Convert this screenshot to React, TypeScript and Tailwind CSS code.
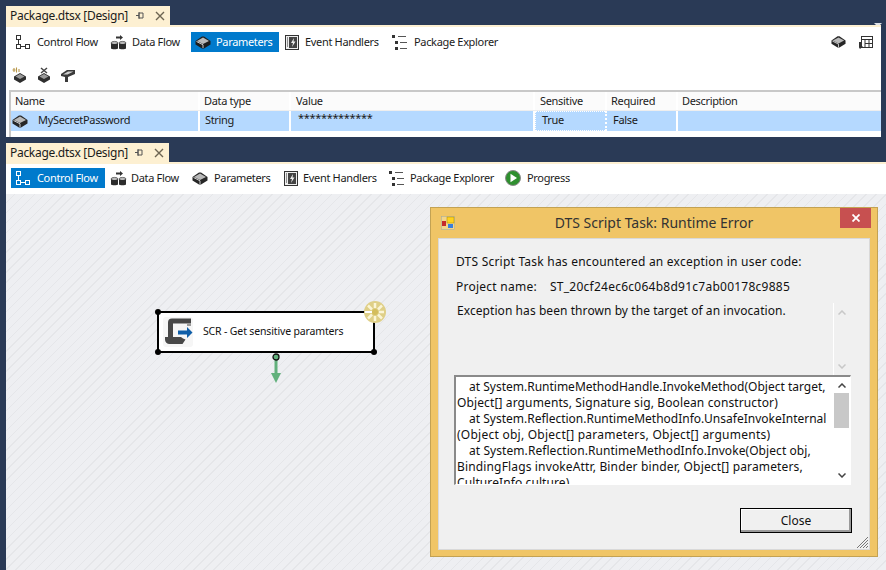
import React from "react";

const Box = ({ w = 16, inv = false }: { w?: number; inv?: boolean }) => (
  <svg width={w} height={w} viewBox="0 0 16 16" className="shrink-0">
    <path d="M0.500 7 7 2.500h2L15.500 7v3.500L9 14.500H7L0.500 10.500z" fill={inv ? "#1d1d1d" : "#262626"} />
    <path d="M2 7 8 3.600 14 7 8 10z" fill="#b9b9b9" />
    <path d="M1.500 7.500 8 10.800v3.200" fill="none" stroke="#f2f2f2" strokeWidth="0.800" />
  </svg>
);

const SmallParam = ({ kind }: { kind: "add" | "del" | "y" }) => (
  <svg width="16" height="16" viewBox="0 0 16 16" className="shrink-0">
    {kind !== "y" && <path d="M2 9.500 8 6l6 3.500v3L8 16l-6-3.500z" fill="#2e2e2e" />}
    {kind !== "y" && <path d="M3.500 9.500 8 7l4.500 2.500L8 12z" fill="#9a9a9a" />}
    {kind === "add" && <path d="M2 1v4M4.500 0.500v5M0.500 3h3M7 2v3" stroke="#b8974a" strokeWidth="1.100" fill="none" />}
    {kind === "del" && <path d="M5 1l6 5M11 1 5 6" stroke="#444" strokeWidth="1.500" fill="none" />}
    {kind === "y" && (
      <>
        <path d="M1 7 7 3h8v4l-7 3v5H5v-5L1 9z" fill="#3a3a3a" />
        <path d="M3 7.500 8 4.500h5.500l-6 3z" fill="#cfcfcf" />
      </>
    )}
  </svg>
);

const ControlIcon = ({ inv = false }: { inv?: boolean }) => {
  const c = inv ? "#fff" : "#333";
  return (
    <svg width="16" height="16" viewBox="0 0 16 16" className="shrink-0">
      <g fill="none" stroke={c} strokeWidth="1">
        <rect x="1.500" y="1.500" width="4" height="4" />
        <rect x="1.500" y="10.500" width="4" height="4" />
        <rect x="10.500" y="10.500" width="4" height="4" />
        <path d="M3.500 6v4M6 12.500h4" />
      </g>
    </svg>
  );
};

const DataIcon = () => (
  <svg width="17" height="17" viewBox="0 0 17 17" className="shrink-0">
    <path d="M6 2.500h4V1l3 2.500L10 6V4.500H6z" fill="#333" />
    <ellipse cx="4.500" cy="9" rx="3.500" ry="1.600" fill="#bbb" stroke="#222" strokeWidth="0.600" />
    <path d="M1 9v5.500c0 1 7 1 7 0V9c0 1.300-7 1.300-7 0z" fill="#2c2c2c" />
    <ellipse cx="12.500" cy="9" rx="3.500" ry="1.600" fill="#bbb" stroke="#222" strokeWidth="0.600" />
    <path d="M9 9v5.500c0 1 7 1 7 0V9c0 1.300-7 1.300-7 0z" fill="#2c2c2c" />
  </svg>
);

const EventIcon = () => (
  <svg width="14" height="15" viewBox="0 0 14 15" className="shrink-0">
    <rect x="0.500" y="0.500" width="13" height="14" fill="#eee" stroke="#333" />
    <path d="M2 3h1M2 5h1M2 7h1M2 9h1M2 11h1" stroke="#333" />
    <rect x="4" y="2" width="8" height="11" fill="#444" />
    <path d="M9 3 6 8h2l-1 4 3.500-5.500H8.500z" fill="#eee" />
  </svg>
);

const ExplorerIcon = () => (
  <svg width="15" height="15" viewBox="0 0 15 15" className="shrink-0">
    <g fill="#333">
      <rect x="0" y="0" width="3" height="3" />
      <rect x="3" y="6" width="3" height="3" />
      <rect x="3" y="12" width="3" height="3" />
      <rect x="6" y="1" width="8" height="1" fill="#555" />
      <rect x="8" y="7" width="7" height="1" fill="#555" />
      <rect x="8" y="13" width="7" height="1" fill="#555" />
    </g>
  </svg>
);

const ProgressIcon = () => (
  <svg width="16" height="16" viewBox="0 0 16 16" className="shrink-0">
    <circle cx="8" cy="8" r="7.500" fill="#2f8f2f" stroke="#8a8a8a" strokeWidth="1" />
    <path d="M5.500 3.800 12 8l-6.500 4.200z" fill="#fff" />
  </svg>
);

const Tab = ({ textW, pinGap, closeGap }: { textW: string; pinGap: string; closeGap: string }) => (
  <div className="flex h-[19px] w-fit items-center bg-[#fdf0d2] pl-1 pr-[5px] text-[12px] tracking-[-0.3px] text-[#1b1b1b]">
    <span className={`whitespace-nowrap pt-[1px] ${textW}`}>Package.dtsx [Design]</span>
    <svg width="9" height="9" viewBox="0 0 9 9" className={`shrink-0 ${pinGap}`}>
      <path d="M0 4.500h3M3 2h4v5H3zM3 1v7" fill="none" stroke="#555" />
    </svg>
    <svg width="10" height="10" viewBox="0 0 10 10" className={`shrink-0 ${closeGap}`}>
      <path d="M1 1l8 8M9 1l-8 8" stroke="#6d6552" strokeWidth="1.400" />
    </svg>
  </div>
);

const Item = ({ icon, label, active, ml, gap, w }: { icon: React.ReactNode; label: string; active?: boolean; ml: string; gap: string; w: string }) => (
  <div className={`flex h-5 shrink-0 items-center pl-1 ${ml} ${gap} ${w} ${active ? "bg-[#007acc] text-white" : "text-[#1b1b1b]"}`}>
    {icon}
    <span className="whitespace-nowrap">{label}</span>
  </div>
);

const Cell = ({ w, children, className = "" }: { w: string; children?: React.ReactNode; className?: string }) => (
  <div className={`flex h-full shrink-0 items-center border-r-2 border-white ${w} ${className}`}>{children}</div>
);

export default function App() {
  return (
    <div className="flex h-[570px] w-[886px] flex-col overflow-hidden bg-[#2a3a56] font-['Noto_Sans','Open_Sans',sans-serif] text-[11px] tracking-[-0.33px]">
      {/* Top document */}
      <div className="ml-[6px] mt-[6px] flex h-[19px] items-center justify-between">
        <Tab textW="w-[116px]" pinGap="ml-[10px]" closeGap="ml-[10px]" />
        <svg width="8" height="5" viewBox="0 0 8 5" className="mr-[4px] mt-[20px]">
          <path d="M0 0h8L4 4z" fill="#dfe3ea" />
        </svg>
      </div>
      <div className="ml-[6px] mr-[5px] h-[112px] shrink-0 border-t-2 border-[#fdf0d2] bg-white">
        <div className="flex h-[25px] items-end justify-between">
          <div className="flex items-center">
            <Item icon={<ControlIcon />} label="Control Flow" ml="ml-[5px]" gap="gap-[6px]" w="w-[95px]" />
            <Item icon={<DataIcon />} label="Data Flow" ml="ml-0" gap="gap-[5px]" w="w-[85px]" />
            <Item icon={<Box inv />} label="Parameters" active ml="ml-0" gap="gap-[5px]" w="w-[88px]" />
            <Item icon={<EventIcon />} label="Event Handlers" ml="ml-[2px]" gap="gap-[6px]" w="w-[107px]" />
            <Item icon={<ExplorerIcon />} label="Package Explorer" ml="ml-0" gap="gap-[7px]" w="w-[120px]" />
          </div>
          <div className="mr-[8px] flex items-center gap-[13px] pb-[3px]">
            <Box w={15} />
            <svg width="14" height="14" viewBox="0 0 14 14">
              <g fill="none" stroke="#333">
                <rect x="2.500" y="1.500" width="11" height="11" />
                <path d="M2.500 4.500h11M6 4.500v8M10 4.500v8M6 8.500h8" />
              </g>
              <path d="M0 7h2v4h2l-3 3-2-3h1z" fill="#333" />
            </svg>
          </div>
        </div>
        <div className="flex h-[38px] items-center gap-[8px] pl-[6px] pt-[8px]">
          <SmallParam kind="add" />
          <SmallParam kind="del" />
          <SmallParam kind="y" />
        </div>
        <div className="ml-[3px] h-[47px] border-l-2 border-t-2 border-[#c8c8c8] text-[#1b1b1b]">
          <div className="flex h-[19px] items-center border-b border-[#eee] bg-[#fbfbfb]">
            <Cell w="w-[189px]" className="pl-[4px]">Name</Cell>
            <Cell w="w-[91px]" className="pl-[4px]">Data type</Cell>
            <Cell w="w-[244px]" className="pl-[5px]">Value</Cell>
            <Cell w="w-[72px]" className="pl-[5px]">Sensitive</Cell>
            <Cell w="w-[71px]" className="pl-[4px]">Required</Cell>
            <div className="pl-[4px]">Description</div>
          </div>
          <div className="flex h-[20px] items-center bg-[#b5d9ff] pb-0">
            <Cell w="w-[189px]" className="pb-[1px] pl-[1px]">
              <Box w={16} />
              <span className="ml-[10px]">MySecretPassword</span>
            </Cell>
            <Cell w="w-[91px]" className="pb-[1px] pl-[5px]">String</Cell>
            <Cell w="w-[244px]" className="pl-[7px]">
              <span className="-mt-[6px]">*************</span>
            </Cell>
            <Cell w="w-[72px]" className="border-[1px] border-dotted border-black pb-[1px] pl-[6px]">True</Cell>
            <Cell w="w-[71px]" className="pb-[1px] pl-[6px]">False</Cell>
          </div>
        </div>
      </div>

      {/* Bottom document */}
      <div className="ml-[6px] mt-[6px]">
        <Tab textW="w-[115px]" pinGap="ml-[10px]" closeGap="ml-[10px]" />
      </div>
      <div className="ml-[6px] flex min-h-0 flex-1 flex-col">
        <div className="flex h-[32px] shrink-0 items-center border-t-2 border-[#fdf0d2] bg-white pb-[2px]">
          <Item icon={<ControlIcon inv />} label="Control Flow" active ml="ml-[5px]" gap="gap-[6px]" w="w-[94px]" />
          <Item icon={<DataIcon />} label="Data Flow" ml="ml-[1px]" gap="gap-[4px]" w="w-[82px]" />
          <Item icon={<Box />} label="Parameters" ml="ml-0" gap="gap-[6px]" w="w-[92px]" />
          <Item icon={<EventIcon />} label="Event Handlers" ml="ml-0" gap="gap-[5px]" w="w-[105px]" />
          <Item icon={<ExplorerIcon />} label="Package Explorer" ml="ml-0" gap="gap-[6px]" w="w-[116px]" />
          <Item icon={<ProgressIcon />} label="Progress" ml="ml-0" gap="gap-[6px]" w="w-[80px]" />
        </div>
        <div className="relative min-h-0 flex-1 bg-[#eeeff2] bg-[repeating-linear-gradient(135deg,#eeeff2_0,#eeeff2_6px,#e5e6e9_6px,#e5e6e9_7px)]">
          {/* Task node */}
          <div className="absolute left-[151px] top-[117px] flex h-[42px] w-[218px] items-center rounded-[3px] border-2 border-black bg-white text-[10.500px] tracking-[-0.15px] text-[#111]">
            <svg width="30" height="30" viewBox="0 0 30 30" className="ml-[4px] shrink-0">
              <rect x="0" y="0" width="30" height="30" rx="3" fill="#f6f6f6" />
              <path d="M28 1.500H9a4 4 0 0 0-4 4V20h5V6.500h18z" fill="#484848" />
              <path d="M24 6.500h4v2.500h-4z" fill="#9a9a9a" />
              <path d="M2 20h16l2 1.500 2.500 1-3 4.500H6.500A4.500 4.500 0 0 1 2 22.500z" fill="#484848" />
              <path d="M15 13.500h9V10l5.500 5.500L24 21v-3.500h-9z" fill="#0f5ea8" />
            </svg>
            <span className="ml-[10px] whitespace-nowrap">SCR - Get sensitive paramters</span>
            <span className="absolute -left-[4px] -top-[4px] size-[6px] rounded-full bg-black" />
            <span className="absolute -bottom-[4px] -left-[4px] size-[6px] rounded-full bg-black" />
            <span className="absolute -bottom-[4px] -right-[4px] size-[6px] rounded-full bg-black" />
            <svg width="24" height="24" viewBox="0 0 24 24" className="absolute -right-[14px] -top-[13px]">
              <circle cx="12" cy="12" r="11" fill="#dfcf87" />
              <g stroke="#fbf5d6" strokeWidth="2.500">
                <path d="M12 3v5M12 16v5M16 12h5M5 5.500l4 4M19 5.500l-4 4M5 18.500l4-4M19 18.500l-4-4" />
              </g>
              <rect x="2" y="11" width="7" height="2" fill="#fff" />
              <circle cx="12" cy="12" r="3" fill="#d4bd5c" />
            </svg>
          </div>
          <svg width="14" height="32" viewBox="0 0 14 32" className="absolute left-[263px] top-[158px]">
            <path d="M7 7v16" stroke="#62b17c" strokeWidth="3" />
            <path d="M2 21h10l-5 10z" fill="#62b17c" />
            <circle cx="7" cy="5" r="3" fill="#62b17c" stroke="#111" strokeWidth="1.300" />
          </svg>

          {/* Dialog */}
          <div className="absolute left-[424px] top-[13px] flex h-[350px] w-[448px] flex-col border border-[#c3a253] bg-[#f0c566] tracking-normal">
            <div className="relative flex h-[30px] shrink-0 items-center justify-center pb-[2px] text-[14px] text-[#333]">
              <svg width="14" height="14" viewBox="0 0 14 14" className="absolute left-[10px] top-[8px]">
                <rect x="0.500" y="0.500" width="13" height="13" fill="#f2d58a" stroke="#9aa" strokeWidth="0.500" />
                <rect x="6" y="1" width="7" height="6" fill="#ffd21f" stroke="#a80" strokeWidth="0.500" />
                <rect x="1" y="5" width="4" height="5" fill="#c62a2a" />
                <rect x="7" y="8" width="5" height="4" fill="#3a7fdc" />
              </svg>
              <span>DTS Script Task: Runtime Error</span>
              <div className="absolute right-[6px] top-0 flex h-[20px] w-[31px] items-center justify-center bg-[#c75050]">
                <svg width="8" height="8" viewBox="0 0 8 8">
                  <path d="M0.500 0.500l7 7M7.500 0.500l-7 7" stroke="#fff" strokeWidth="1.800" />
                </svg>
              </div>
            </div>
            <div className="relative mx-[7px] mb-[6px] flex-1 border border-[#d9d9d9] bg-[#f0f0f0] text-[12px] text-[#111]">
              <div className="pl-[17px] pt-[14px] tracking-[0.22px]">DTS Script Task has encountered an exception in user code:</div>
              <div className="flex pl-[17px] pt-[7px] tracking-[0.25px]">
                <span className="w-[94px]">Project name:</span>
                <span>ST_20cf24ec6c064b8d91c7ab00178c9885</span>
              </div>
              <div className="ml-[15px] mr-[20px] flex h-[79px] items-start justify-between pl-[3px] tracking-[0.07px]">
                <span className="mt-[6px]">Exception has been thrown by the target of an invocation.</span>
                <div className="mt-[7px] flex h-[72px] w-[16px] shrink-0 flex-col items-center justify-between border-l border-white pb-[6px] pt-[7px] text-[#c8c8c8]">
                  <svg width="8" height="5" viewBox="0 0 8 5"><path d="M0.500 4.500 4 1l3.500 3.500" fill="none" stroke="currentColor" strokeWidth="1.500" /></svg>
                  <svg width="8" height="5" viewBox="0 0 8 5"><path d="M0.500 0.500 4 4l3.500-3.500" fill="none" stroke="currentColor" strokeWidth="1.500" /></svg>
                </div>
              </div>
              <div className="ml-[15px] flex h-[110px] w-[397px] overflow-hidden border-b border-l-2 border-r border-t-2 border-b-white border-l-[#8a8a8a] border-r-white border-t-[#8a8a8a] bg-white">
                <div className="w-[378px] shrink-0 overflow-hidden pl-[1px] pt-[2px] leading-[16px]">
                  <div className="indent-[12px] tracking-[0px]">at System.RuntimeMethodHandle.InvokeMethod(Object target,</div>
                  <div className="tracking-[0.12px]">Object[] arguments, Signature sig, Boolean constructor)</div>
                  <div className="indent-[12px] tracking-[0px]">at System.Reflection.RuntimeMethodInfo.UnsafeInvokeInternal</div>
                  <div className="tracking-[0.25px]">(Object obj, Object[] parameters, Object[] arguments)</div>
                  <div className="indent-[12px] tracking-[0.07px]">at System.Reflection.RuntimeMethodInfo.Invoke(Object obj,</div>
                  <div className="tracking-[0.15px]">BindingFlags invokeAttr, Binder binder, Object[] parameters,</div>
                  <div className="tracking-[0.1px]">CultureInfo culture)</div>
                </div>
                <div className="flex w-[15px] shrink-0 flex-col items-center bg-white">
                  <svg width="8" height="5" viewBox="0 0 8 5" className="mt-[6px]"><path d="M0.500 4.500 4 1l3.500 3.500" fill="none" stroke="#444" strokeWidth="1.500" /></svg>
                  <div className="mt-[5px] h-[35px] w-full bg-[#c8c8c8]" />
                  <svg width="8" height="5" viewBox="0 0 8 5" className="mt-[45px]"><path d="M0.500 0.500 4 4l3.500-3.500" fill="none" stroke="#444" strokeWidth="1.500" /></svg>
                </div>
              </div>
              <div className="mr-[17px] mt-[23px] flex justify-end">
                <div className="flex h-[25px] w-[112px] items-center justify-center border border-black bg-[#f0f0f0] shadow-[inset_-2px_-2px_0_#9a9a9a,inset_1px_1px_0_#fff]">
                  Close
                </div>
              </div>
              <svg width="14" height="14" viewBox="0 0 14 14" className="absolute bottom-0 right-0">
                <path d="M13 2 2 13M13 5l-8 8M13 8l-5 5M13 11l-2 2" stroke="#777" strokeWidth="1" />
              </svg>
            </div>
          </div>
        </div>
      </div>
    </div>
  );
}
